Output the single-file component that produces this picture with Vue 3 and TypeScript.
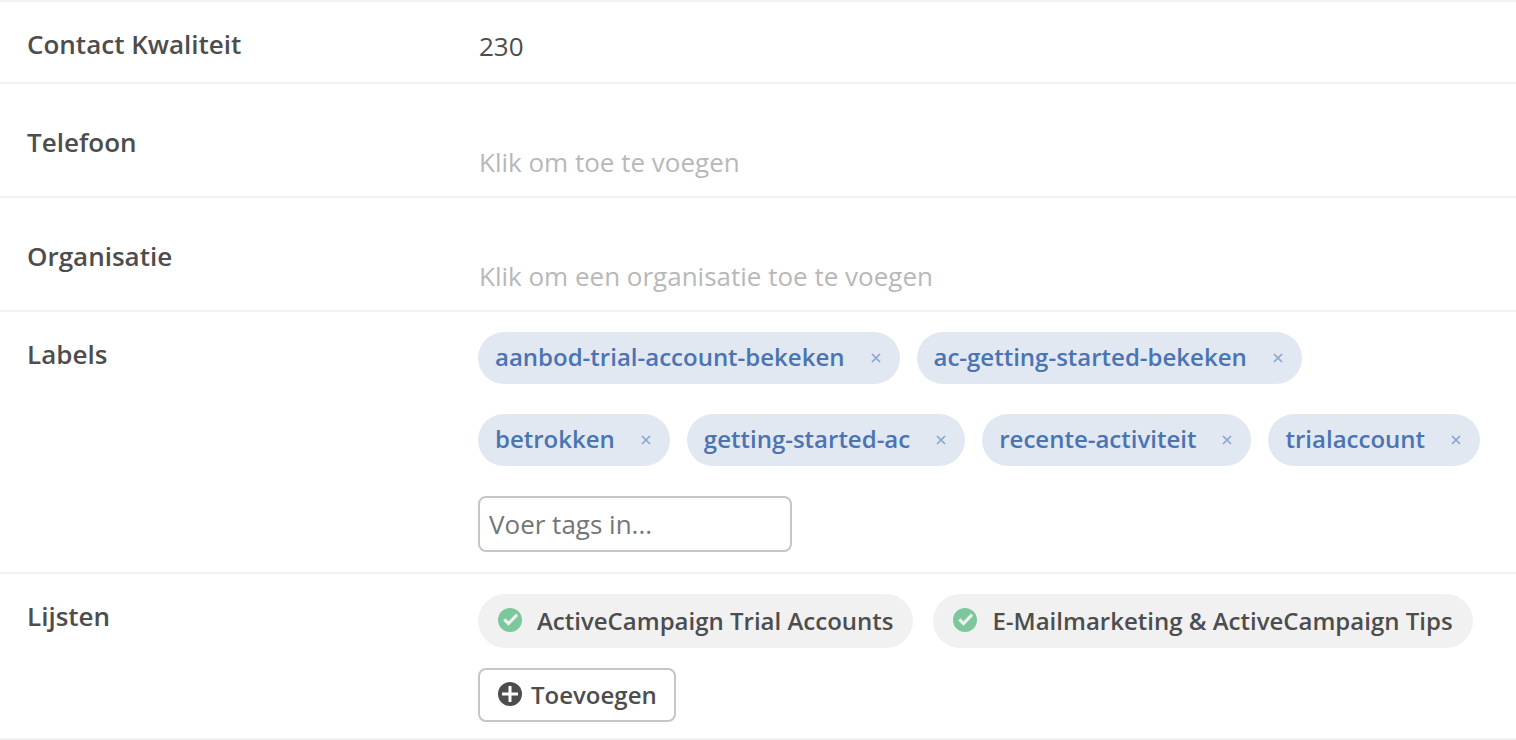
<script setup lang="ts">
import { ref } from 'vue'

const tags = ref<string[]>([
  'aanbod-trial-account-bekeken',
  'ac-getting-started-bekeken',
  'betrokken',
  'getting-started-ac',
  'recente-activiteit',
  'trialaccount',
])
const lists = ref<string[]>(['ActiveCampaign Trial Accounts', 'E-Mailmarketing & ActiveCampaign Tips'])
const newTag = ref('')

function removeTag(tag: string) {
  tags.value = tags.value.filter((t) => t !== tag)
}

function addTag() {
  const value = newTag.value.trim()
  if (value) tags.value.push(value)
  newTag.value = ''
}
</script>

<template>
  <main class="details">
    <section class="row">
      <h2 class="name">Contact Kwaliteit</h2>
      <div class="value score">230</div>
    </section>
    <section class="row tall">
      <h2 class="name">Telefoon</h2>
      <div class="value"><button type="button" class="empty">Klik om toe te voegen</button></div>
    </section>
    <section class="row tall">
      <h2 class="name">Organisatie</h2>
      <div class="value"><button type="button" class="empty">Klik om een organisatie toe te voegen</button></div>
    </section>
    <section class="row">
      <h2 class="name"><label for="tag-input">Labels</label></h2>
      <div class="value">
        <ul class="tags">
          <li v-for="tag in tags" :key="tag" class="tag">
            <span>{{ tag }}</span>
            <button type="button" class="remove" :aria-label="`${tag} verwijderen`" @click="removeTag(tag)">
              <svg width="10" height="10" viewBox="0 0 10 10" aria-hidden="true">
                <path d="M1 1l8 8M9 1l-8 8" fill="none" stroke="currentColor" stroke-width="1.7" />
              </svg>
            </button>
          </li>
        </ul>
        <input id="tag-input" v-model="newTag" class="tag-input" type="text" placeholder="Voer tags in..." @keyup.enter="addTag" />
      </div>
    </section>
    <section class="row">
      <h2 class="name">Lijsten</h2>
      <div class="value">
        <ul class="lists">
          <li v-for="list in lists" :key="list" class="list">
            <svg width="24" height="26" viewBox="0 0 24 26" aria-hidden="true">
              <circle cx="12" cy="12" r="12" fill="#7dc79c" />
              <path d="M6.3 11.4l4.2 4.2 8.6-9" fill="none" stroke="#f1f1f1" stroke-width="3.1" />
            </svg>
            <span>{{ list }}</span>
          </li>
        </ul>
        <button type="button" class="add">
          <svg width="24" height="26" viewBox="0 0 24 26" aria-hidden="true">
            <circle cx="12" cy="12" r="12" fill="#4d4d4d" />
            <path d="M12 4v16M4 12h16" fill="none" stroke="#fff" stroke-width="3" />
          </svg>
          <span>Toevoegen</span>
        </button>
      </div>
    </section>
  </main>
</template>

<style>
body {
  margin: 0;
  background: #fff;
}
</style>

<style scoped>
.details {
  border-top: 2px solid #f1f1f1;
  color: #4d4d4d;
  font-family: "Open Sans", "Noto Sans", sans-serif;
  font-size: 26px;
  line-height: 36px;
}
.row {
  display: grid;
  grid-template-columns: 451px minmax(0, 1fr);
  padding: 20px 27px;
  border-bottom: 2px solid #f1f1f1;
}
.row:first-child {
  padding-top: 24px;
}
.row:last-child {
  padding-bottom: 16px;
}
.tall {
  padding: 40px 27px 16px;
}
.name {
  margin: 4px 0 0;
  font-size: 26px;
  font-weight: 600;
  line-height: 36px;
}
.row:first-child .name,
.tall .name {
  margin-top: 0;
}
.score {
  padding-top: 2px;
  margin-bottom: -2px;
}
.tall .value {
  padding-top: 20px;
}
.score,
.tall .value {
  padding-left: 1px;
}
button {
  font: inherit;
  cursor: pointer;
}
.empty {
  display: block;
  padding: 0;
  border: 0;
  background: none;
  color: #b8b8b8;
  text-align: left;
}
ul {
  display: flex;
  flex-wrap: wrap;
  margin: 0;
  padding: 0;
  list-style: none;
}
.tags {
  gap: 30px 17px;
}
.tag {
  display: flex;
  align-items: center;
  height: 52px;
  padding: 0 14px 0 17px;
  border-radius: 26px;
  background: #e2e8f2;
  color: #4a74b2;
  font-size: 24px;
  font-weight: 600;
  box-sizing: border-box;
}
.tag span {
  padding-bottom: 2px;
}
.remove {
  display: flex;
  margin-left: 21px;
  padding: 5px;
  border: 0;
  background: none;
  color: #89a6d0;
}
.tag-input {
  display: block;
  width: 314px;
  height: 56px;
  margin-top: 30px;
  padding: 0 9px;
  box-sizing: border-box;
  border: 2px solid #c6c6c6;
  border-radius: 8px;
  background: #fff;
  color: #4d4d4d;
  font: inherit;
}
.tag-input::placeholder {
  color: #757575;
  opacity: 1;
}
.lists {
  gap: 20px;
}
.list {
  display: flex;
  align-items: center;
  gap: 15px;
  height: 54px;
  padding: 0 20px;
  box-sizing: border-box;
  border-radius: 27px;
  background: #f1f1f1;
  font-size: 24px;
  font-weight: 600;
}
.add {
  display: flex;
  align-items: center;
  gap: 9px;
  height: 54px;
  margin-top: 20px;
  padding: 0 17px 0 18px;
  border: 2px solid #c6c6c6;
  border-radius: 8px;
  background: #fff;
  color: #4d4d4d;
  font-size: 24px;
  font-weight: 600;
}
</style>
